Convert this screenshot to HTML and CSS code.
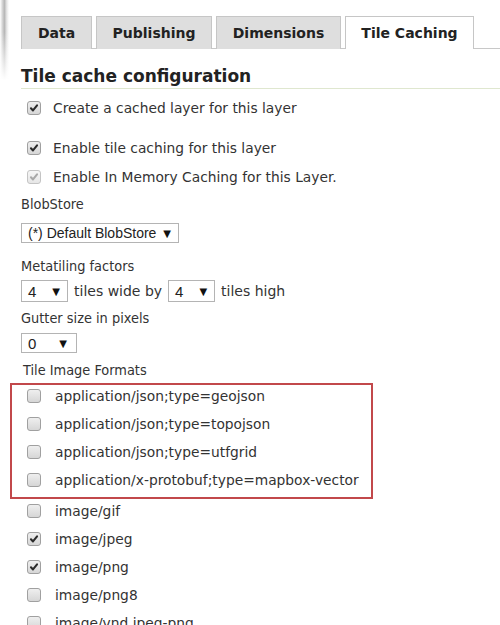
FILE: index.html
```html
<!DOCTYPE html>
<html>
<head>
<meta charset="utf-8">
<link rel="stylesheet" href="styles.css">
</head>
<body>
<div class="page">
  <div class="edge"></div>
  <div class="main">
    <div class="tabs">
      <div class="tab t-data">Data</div>
      <div class="tab t-pub">Publishing</div>
      <div class="tab t-dim">Dimensions</div>
      <div class="tab t-tile active">Tile Caching</div>
    </div>
    <h2 class="heading">Tile cache configuration</h2>

    <div class="row first"><span class="cb checked"><svg viewBox="0 0 13 13"><path d="M3.2 6.8 L5.4 9.2 L9.8 3.6" /></svg></span><span class="rtext">Create a cached layer for this layer</span></div>
    <div class="row spaced"><span class="cb checked"><svg viewBox="0 0 13 13"><path d="M3.2 6.8 L5.4 9.2 L9.8 3.6" /></svg></span><span class="rtext">Enable tile caching for this layer</span></div>
    <div class="row"><span class="cb checked disabled"><svg viewBox="0 0 13 13"><path d="M3.2 6.8 L5.4 9.2 L9.8 3.6" /></svg></span><span class="rtext">Enable In Memory Caching for this Layer.</span></div>

    <div class="label l-blob">BlobStore</div>
    <div class="select s-blob"><span>(*) Default BlobStore</span><span class="arrow">▼</span></div>

    <div class="label l-meta">Metatiling factors</div>
    <div class="meta-row">
      <div class="select s-meta"><span>4</span><span class="arrow">▼</span></div>
      <span class="mtext">tiles wide by</span>
      <div class="select s-meta"><span>4</span><span class="arrow">▼</span></div>
      <span class="mtext">tiles high</span>
    </div>

    <div class="label l-gutter">Gutter size in pixels</div>
    <div class="select s-gutter"><span>0</span><span class="arrow">▼</span></div>

    <div class="label l-formats">Tile Image Formats</div>
    <div class="formats">
      <div class="highlight">
        <div class="row fmt"><span class="cb"></span><span class="rtext">application/json;type=geojson</span></div>
        <div class="row fmt"><span class="cb"></span><span class="rtext">application/json;type=topojson</span></div>
        <div class="row fmt"><span class="cb"></span><span class="rtext">application/json;type=utfgrid</span></div>
        <div class="row fmt"><span class="cb"></span><span class="rtext">application/x-protobuf;type=mapbox-vector</span></div>
      </div>
      <div class="row fmt"><span class="cb"></span><span class="rtext">image/gif</span></div>
      <div class="row fmt"><span class="cb checked"><svg viewBox="0 0 13 13"><path d="M3.2 6.8 L5.4 9.2 L9.8 3.6" /></svg></span><span class="rtext">image/jpeg</span></div>
      <div class="row fmt"><span class="cb checked"><svg viewBox="0 0 13 13"><path d="M3.2 6.8 L5.4 9.2 L9.8 3.6" /></svg></span><span class="rtext">image/png</span></div>
      <div class="row fmt"><span class="cb"></span><span class="rtext">image/png8</span></div>
      <div class="row fmt"><span class="cb"></span><span class="rtext">image/vnd.jpeg-png</span></div>
    </div>
  </div>
</div>
</body>
</html>
```
FILE: styles.css
```css
html, body {
  margin: 0;
  padding: 0;
  background: #fff;
  overflow: hidden;
}
body {
  width: 500px;
  height: 625px;
  font-family: "DejaVu Sans", Verdana, sans-serif;
  color: #333;
}
.page {
  display: flex;
  height: 625px;
}
.edge {
  width: 9px;
  height: 80px;
  flex: none;
  background:
    linear-gradient(to bottom, rgba(255,255,255,0) 40%, #fff 100%),
    linear-gradient(to right, #fff 0, #c8c8c8 35%, #b8b8b8 50%, #e6e6e6 75%, #fff 100%);
}
.main {
  flex: 1;
  padding: 16px 0 0 12px;
}
.tabs {
  display: flex;
  gap: 4px;
  height: 33px;
  border-bottom: 1px solid #c8c8c8;
  box-sizing: border-box;
}
.tab {
  height: 33px;
  box-sizing: border-box;
  border: 1px solid #c6c6c6;
  border-bottom: none;
  background: #dedede;
  font-weight: bold;
  font-size: 14px;
  line-height: 33px;
  text-align: center;
  color: #222;
  flex: none;
}
.t-data { width: 71px; }
.t-pub { width: 116px; }
.t-dim { width: 125px; }
.t-tile { width: 129px; }
.tab.active {
  background: #fff;
  position: relative;
  z-index: 1;
}
.heading {
  margin: 16px 0 0;
  padding: 0 0 1px;
  font-size: 17px;
  line-height: 22px;
  font-weight: bold;
  color: #222;
  border-bottom: 1px solid #dfe7cf;
}
.row {
  display: flex;
  align-items: center;
  height: 29px;
  font-size: 13.8px;
  color: #333;
}
.row.first { margin-top: 4px; }
.row.spaced { margin-top: 11px; }
.cb {
  width: 14px;
  height: 14px;
  box-sizing: border-box;
  margin-left: 6px;
  margin-right: 12px;
  border: 1px solid #a0a0a0;
  border-radius: 3px;
  background: linear-gradient(#efefef, #d6d6d6);
  flex: none;
  display: flex;
  align-items: center;
  justify-content: center;
}
.cb svg {
  width: 12px;
  height: 12px;
}
.cb svg path {
  fill: none;
  stroke: #2a2a2a;
  stroke-width: 2.2;
  stroke-linecap: round;
  stroke-linejoin: round;
}
.cb.disabled { border-color: #c4c4c4; background: linear-gradient(#f6f6f6, #e6e6e6); }
.cb.disabled svg path { stroke: #a8a8a8; }
.label {
  font-family: "DejaVu Sans Condensed", "DejaVu Sans", sans-serif;
  font-size: 14.4px;
  line-height: 20px;
  color: #333;
}
.l-blob { margin-top: 3px; }
.l-meta { margin-top: 13px; }
.l-gutter { margin-top: 6px; }
.l-formats { margin-top: 7px; padding-left: 2px; }
.select {
  display: flex;
  align-items: center;
  justify-content: space-between;
  box-sizing: border-box;
  border: 1px solid #b4b4b4;
  background: #fff;
  font-family: "Liberation Sans", Arial, sans-serif;
  font-size: 14px;
  color: #222;
  padding: 0 7px 0 6px;
}
.arrow {
  font-size: 10px;
  color: #111;
  font-family: "DejaVu Sans", sans-serif;
}
.s-blob {
  width: 158px;
  height: 20px;
  margin-top: 9px;
}
.meta-row {
  display: flex;
  align-items: center;
  gap: 6px;
  margin-top: 4px;
}
.s-meta {
  width: 47px;
  height: 22px;
  font-size: 15px;
}
.mtext {
  font-size: 14px;
  color: #333;
}
.s-gutter {
  width: 56px;
  height: 20px;
  margin-top: 5px;
  font-size: 15px;
  padding-right: 9px;
}
.formats {
  margin-top: 3px;
}
.row.fmt {
  height: 28px;
}
.row.fmt .cb { margin-right: 14px; }
.highlight {
  margin-left: -11px;
  width: 363px;
  box-sizing: border-box;
  border: 2px solid #c2484b;
  padding: 0 0 3px 9px;
  margin-bottom: -2px;
}
.highlight .row.fmt:first-child { margin-top: -3px; }
```
